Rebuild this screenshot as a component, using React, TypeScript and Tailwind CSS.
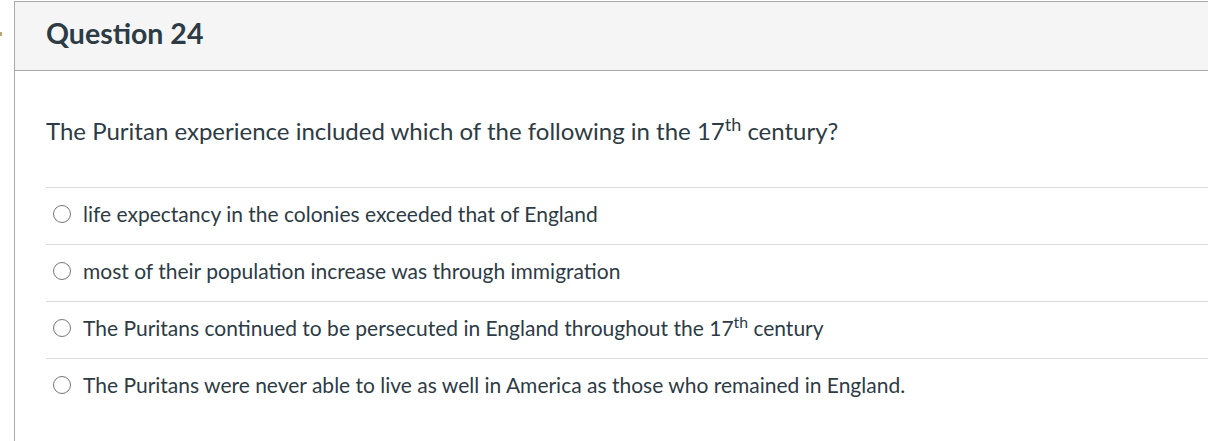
import React from 'react';

const answers: React.ReactNode[] = [
  'life expectancy in the colonies exceeded that of England',
  'most of their population increase was through immigration',
  <>
    The Puritans continued to be persecuted in England throughout the 17<sup>th</sup> century
  </>,
  'The Puritans were never able to live as well in America as those who remained in England.',
];

const Radio = () => (
  <span className="w-[18px] h-[18px] rounded-full border-[1.5px] border-[#777] bg-white shrink-0" />
);

export default function App() {
  return (
    <div
      className="w-[1208px] h-[441px] bg-white flex overflow-hidden text-[#2d3b45]"
      style={{ fontFamily: 'Lato, "Noto Sans", sans-serif' }}
    >
      {/* left gutter */}
      <div className="w-[14px] shrink-0 relative">
        <span className="absolute left-0 top-[32px] w-[2px] h-[4px] bg-[#b5a676]" />
      </div>

      <div className="flex-1 mt-px border-l border-t border-[#aaa] flex flex-col">
        {/* Header */}
        <div className="h-[69px] bg-[#f5f5f5] border-b border-[#aaa] flex items-center pl-[31px] pb-[5px]">
          <h2 className="text-[28.5px] font-bold leading-none">Question 24</h2>
        </div>

        {/* Body */}
        <div className="pl-[31px]">
          <p className="pt-[45px] text-[24px] leading-[30px]">
            The Puritan experience included which of the following in the 17<sup>th</sup> century?
          </p>
          <div className="mt-[41px]">
            {answers.map((a, i) => (
              <div key={i} className="h-[57px] border-t border-[#ddd] flex items-center gap-[12px] pl-[7px] pb-[5px]">
                <Radio />
                <span className="text-[21px] leading-[26px]">{a}</span>
              </div>
            ))}
          </div>
        </div>
      </div>
    </div>
  );
}
